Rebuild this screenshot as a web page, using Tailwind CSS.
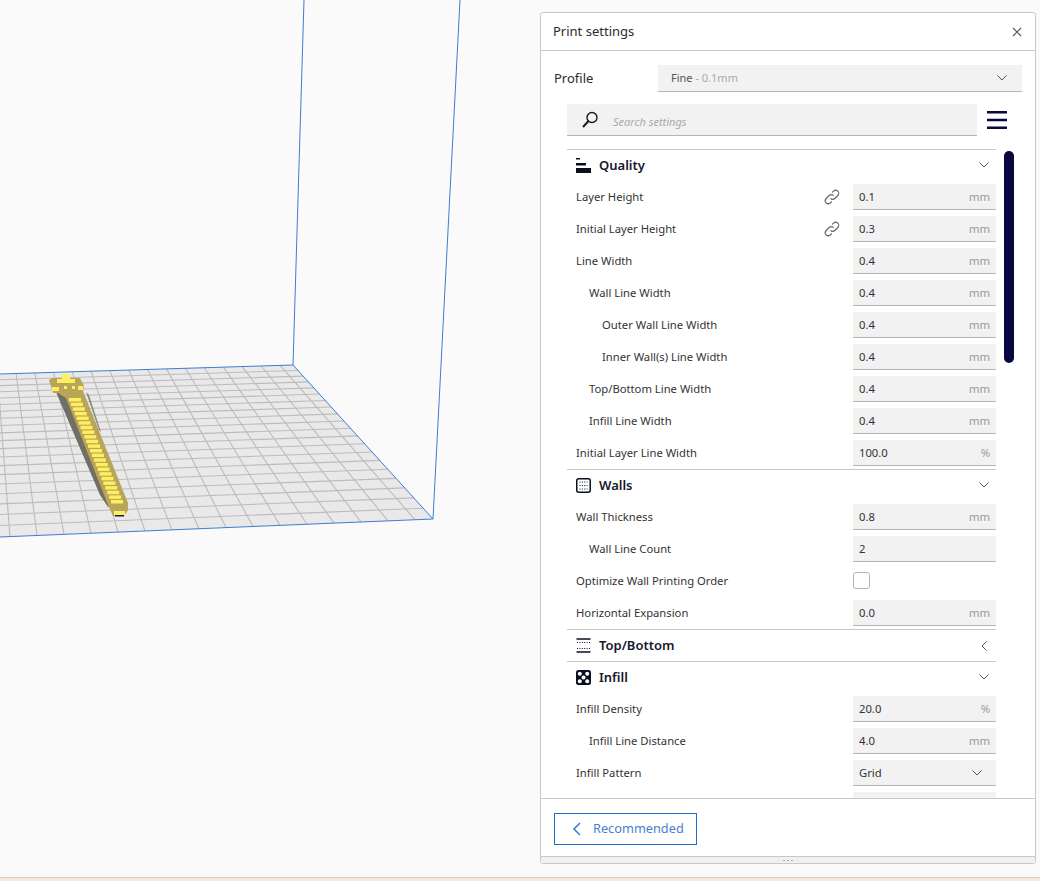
<!DOCTYPE html>
<html lang="en">

<head>
  <title>Print settings</title>
  <meta charset="UTF-8" />
  <script src="https://cdn.jsdelivr.net/npm/@tailwindcss/browser@4"></script>
</head>

<body class="font-['Noto_Sans',sans-serif] bg-[#fafafa] overflow-hidden">
  <div class="relative w-[1040px] h-[881px] flex flex-col">
    <!-- build volume -->
    <svg id="scene" class="flex-1 w-full" viewBox="0 0 1040 877">
      <polygon points="0,374 293,365 433,519 0,537" fill="#e9e9e9" />
      <g id="grid" stroke="#bcbcbc" stroke-width="1.1"></g>
      <g fill="none" stroke="#3d7dcf" stroke-width="1">
        <path d="M0 374 L293 365 L433 519 L0 537" />
        <path d="M293 365 L304 0" />
        <path d="M433 519 L460 0" />
      </g>
      <!-- model -->
      <polygon points="56,392 66,392 112,507 108,507 100,495" fill="#6f6f66" />
      <polygon points="86,392 89,395 101,432 99,430" fill="#8a8a80" />
      <polygon points="49,380 52,378 80,378 84,386 83,391 128,503 128,510 124,516 113,516 108,505 66,398 58,393 53,393" fill="#b8a558" />
      <g id="rungs" fill="#fdee62"></g>
      <g fill="#fdee62">
        <rect x="62" y="374" width="8" height="8" />
        <rect x="57" y="379" width="18" height="4" />
        <rect x="52" y="387" width="7" height="4" />
        <rect x="78" y="386" width="5" height="4" />
        <rect x="64" y="386" width="3" height="3" />
        <rect x="72" y="386" width="3" height="3" />
        <rect x="114" y="511" width="11" height="4" />
      </g>
      <rect x="115" y="515" width="9" height="1.5" fill="#1c1c30" />
    </svg>
    <div class="h-1 bg-[#f6e8de] border-t border-[#dcc8bc]"></div>

    <!-- print settings panel -->
    <div class="absolute left-[540px] top-3 w-[496px] h-[852px] flex flex-col bg-white border border-[#c8c8c8] rounded-[3px] overflow-hidden text-[#333]">
      <div class="h-[38px] shrink-0 flex items-center justify-between pl-3 pr-[13px] border-b border-[#c8c8c8]">
        <span class="text-[13px] text-[#2b2b2b]">Print settings</span>
        <svg class="w-[10px] h-[10px]" viewBox="0 0 10 10" fill="none" stroke="#555" stroke-width="1.1"><path d="M1 1l8 8M9 1l-8 8" /></svg>
      </div>

      <div class="flex-1 min-h-0 flex flex-col overflow-hidden">
        <div class="flex items-center h-[27px] mt-[14px] shrink-0">
          <span class="w-[104px] ml-[13px] text-[13px] text-[#2b2b2b]">Profile</span>
          <div class="w-[364px] h-[27px] flex items-center justify-between pl-[13px] pr-[15px] bg-[#f2f2f2] border-b border-[#b4b4b4] text-[11px] text-[#555]">
            <span>Fine <span class="text-[#aaa]">- 0.1mm</span></span>
            <svg class="w-[10px] h-[6px]" viewBox="0 0 10 6" fill="none" stroke="#555"><path d="M0.5 0.5L5 5l4.5-4.5" /></svg>
          </div>
        </div>

        <div class="flex items-center mt-3 ml-[26px] shrink-0">
          <div class="w-[410px] h-8 flex items-center bg-[#f2f2f2] border-b border-[#b4b4b4]">
            <svg class="w-[18px] h-[18px] ml-[14px]" viewBox="0 0 18 18" fill="none" stroke="#1a1a1a"><circle cx="11" cy="6.5" r="5" stroke-width="1.4" /><path d="M7.5 10L2 16" stroke-width="2" /></svg>
            <span class="ml-[14px] pt-[6px] text-[11px] italic text-[#aaa]">Search settings</span>
          </div>
          <svg class="w-5 h-[18px] ml-[10px]" viewBox="0 0 20 18" fill="#08073f"><rect width="20" height="2.5" /><rect y="7.75" width="20" height="2.5" /><rect y="15.5" width="20" height="2.5" /></svg>
        </div>

        <div class="relative flex-1 min-h-0 mt-[13px] ml-[26px] w-[429px] text-[11.25px] overflow-hidden">
          <!-- Quality -->
          <div class="h-8 flex items-center border-t border-[#c8c8c8] pl-[9px] pr-[7px]">
            <svg class="w-[15px] h-[15px] mr-2 shrink-0" viewBox="0 0 15 15" fill="#0b1020"><rect width="4" height="1.5" y="0" /><rect y="5" width="10" height="2.5" /><rect y="10" width="15" height="5" /></svg>
            <span class="flex-1 text-[13px] font-semibold text-[#16182c]">Quality</span>
            <svg class="w-[10px] h-[6px] -translate-y-px" viewBox="0 0 10 6" fill="none" stroke="#555"><path d="M0.5 0.5L5 5l4.5-4.5" /></svg>
          </div>
          <div class="h-8 flex items-center">
            <span class="flex-1 pl-[9px]">Layer Height</span>
            <svg class="w-4 h-4 mr-[13px]" viewBox="0 0 16 16" fill="none" stroke="#666" stroke-width="1.2"><path d="M6.5 9.5a3 3 0 0 0 4.3 0l3-3a3 3 0 0 0-4.3-4.3L8.2 3.5" /><path d="M9.5 6.5a3 3 0 0 0-4.3 0l-3 3a3 3 0 0 0 4.3 4.3l1.3-1.3" /></svg>
            <div class="w-[143px] h-[26px] pt-px flex items-center justify-between px-[6px] bg-[#f2f2f2] border-b border-[#b4b4b4]"><span>0.1</span><span class="text-[#999]">mm</span></div>
          </div>
          <div class="h-8 flex items-center">
            <span class="flex-1 pl-[9px]">Initial Layer Height</span>
            <svg class="w-4 h-4 mr-[13px]" viewBox="0 0 16 16" fill="none" stroke="#666" stroke-width="1.2"><path d="M6.5 9.5a3 3 0 0 0 4.3 0l3-3a3 3 0 0 0-4.3-4.3L8.2 3.5" /><path d="M9.5 6.5a3 3 0 0 0-4.3 0l-3 3a3 3 0 0 0 4.3 4.3l1.3-1.3" /></svg>
            <div class="w-[143px] h-[26px] pt-px flex items-center justify-between px-[6px] bg-[#f2f2f2] border-b border-[#b4b4b4]"><span>0.3</span><span class="text-[#999]">mm</span></div>
          </div>
          <div class="h-8 flex items-center">
            <span class="flex-1 pl-[9px]">Line Width</span>
            <div class="w-[143px] h-[26px] pt-px flex items-center justify-between px-[6px] bg-[#f2f2f2] border-b border-[#b4b4b4]"><span>0.4</span><span class="text-[#999]">mm</span></div>
          </div>
          <div class="h-8 flex items-center">
            <span class="flex-1 pl-[22px]">Wall Line Width</span>
            <div class="w-[143px] h-[26px] pt-px flex items-center justify-between px-[6px] bg-[#f2f2f2] border-b border-[#b4b4b4]"><span>0.4</span><span class="text-[#999]">mm</span></div>
          </div>
          <div class="h-8 flex items-center">
            <span class="flex-1 pl-[35px]">Outer Wall Line Width</span>
            <div class="w-[143px] h-[26px] pt-px flex items-center justify-between px-[6px] bg-[#f2f2f2] border-b border-[#b4b4b4]"><span>0.4</span><span class="text-[#999]">mm</span></div>
          </div>
          <div class="h-8 flex items-center">
            <span class="flex-1 pl-[35px]">Inner Wall(s) Line Width</span>
            <div class="w-[143px] h-[26px] pt-px flex items-center justify-between px-[6px] bg-[#f2f2f2] border-b border-[#b4b4b4]"><span>0.4</span><span class="text-[#999]">mm</span></div>
          </div>
          <div class="h-8 flex items-center">
            <span class="flex-1 pl-[22px]">Top/Bottom Line Width</span>
            <div class="w-[143px] h-[26px] pt-px flex items-center justify-between px-[6px] bg-[#f2f2f2] border-b border-[#b4b4b4]"><span>0.4</span><span class="text-[#999]">mm</span></div>
          </div>
          <div class="h-8 flex items-center">
            <span class="flex-1 pl-[22px]">Infill Line Width</span>
            <div class="w-[143px] h-[26px] pt-px flex items-center justify-between px-[6px] bg-[#f2f2f2] border-b border-[#b4b4b4]"><span>0.4</span><span class="text-[#999]">mm</span></div>
          </div>
          <div class="h-8 flex items-center">
            <span class="flex-1 pl-[9px]">Initial Layer Line Width</span>
            <div class="w-[143px] h-[26px] pt-px flex items-center justify-between px-[6px] bg-[#f2f2f2] border-b border-[#b4b4b4]"><span>100.0</span><span class="text-[#999]">%</span></div>
          </div>

          <!-- Walls -->
          <div class="h-8 flex items-center border-t border-[#c8c8c8] pl-[9px] pr-[7px]">
            <svg class="w-[15px] h-[15px] mr-2 shrink-0" viewBox="0 0 15 15" fill="none" stroke="#0b1020"><rect x="0.75" y="0.75" width="13.5" height="13.5" rx="2" stroke-width="1.5" /><path d="M3.5 4h8M3.5 7.5h8M3.5 11h8" stroke-width="1" stroke-dasharray="1 1.4" /></svg>
            <span class="flex-1 text-[13px] font-semibold text-[#16182c]">Walls</span>
            <svg class="w-[10px] h-[6px] -translate-y-px" viewBox="0 0 10 6" fill="none" stroke="#555"><path d="M0.5 0.5L5 5l4.5-4.5" /></svg>
          </div>
          <div class="h-8 flex items-center">
            <span class="flex-1 pl-[9px]">Wall Thickness</span>
            <div class="w-[143px] h-[26px] pt-px flex items-center justify-between px-[6px] bg-[#f2f2f2] border-b border-[#b4b4b4]"><span>0.8</span><span class="text-[#999]">mm</span></div>
          </div>
          <div class="h-8 flex items-center">
            <span class="flex-1 pl-[22px]">Wall Line Count</span>
            <div class="w-[143px] h-[26px] pt-px flex items-center justify-between px-[6px] bg-[#f2f2f2] border-b border-[#b4b4b4]"><span>2</span></div>
          </div>
          <div class="h-8 flex items-center">
            <span class="flex-1 pl-[9px]">Optimize Wall Printing Order</span>
            <div class="w-[143px]"><div class="w-[17px] h-[17px] -mt-px bg-white border border-[#b4b4b4] rounded-[3px]"></div></div>
          </div>
          <div class="h-8 flex items-center">
            <span class="flex-1 pl-[9px]">Horizontal Expansion</span>
            <div class="w-[143px] h-[26px] pt-px flex items-center justify-between px-[6px] bg-[#f2f2f2] border-b border-[#b4b4b4]"><span>0.0</span><span class="text-[#999]">mm</span></div>
          </div>

          <!-- Top/Bottom -->
          <div class="h-8 flex items-center border-t border-[#c8c8c8] pl-[9px] pr-[9px]">
            <svg class="w-[15px] h-[15px] mr-2 shrink-0" viewBox="0 0 15 15" fill="none" stroke="#0b1020"><path d="M0.5 1h14M0.5 14h14" stroke-width="1.4" /><path d="M1 4.5h13M1 10.5h13" stroke-width="1" stroke-dasharray="1 1.4" /></svg>
            <span class="flex-1 text-[13px] font-semibold text-[#16182c]">Top/Bottom</span>
            <svg class="w-[6px] h-[10px]" viewBox="0 0 6 10" fill="none" stroke="#555"><path d="M5.5 0.5L1 5l4.5 4.5" /></svg>
          </div>

          <!-- Infill -->
          <div class="h-8 flex items-center border-t border-[#c8c8c8] pl-[9px] pr-[7px]">
            <svg class="w-[15px] h-[15px] mr-2 shrink-0" viewBox="0 0 15 15"><rect width="15" height="15" rx="2.5" fill="#0b1020" /><g fill="#fff"><circle cx="3.8" cy="3.8" r="2" /><circle cx="11.2" cy="3.8" r="2" /><circle cx="3.8" cy="11.2" r="2" /><circle cx="11.2" cy="11.2" r="2" /><circle cx="7.5" cy="7.5" r="2" /></g></svg>
            <span class="flex-1 text-[13px] font-semibold text-[#16182c]">Infill</span>
            <svg class="w-[10px] h-[6px] -translate-y-px" viewBox="0 0 10 6" fill="none" stroke="#555"><path d="M0.5 0.5L5 5l4.5-4.5" /></svg>
          </div>
          <div class="h-8 flex items-center">
            <span class="flex-1 pl-[9px]">Infill Density</span>
            <div class="w-[143px] h-[26px] pt-px flex items-center justify-between px-[6px] bg-[#f2f2f2] border-b border-[#b4b4b4]"><span>20.0</span><span class="text-[#999]">%</span></div>
          </div>
          <div class="h-8 flex items-center">
            <span class="flex-1 pl-[22px]">Infill Line Distance</span>
            <div class="w-[143px] h-[26px] pt-px flex items-center justify-between px-[6px] bg-[#f2f2f2] border-b border-[#b4b4b4]"><span>4.0</span><span class="text-[#999]">mm</span></div>
          </div>
          <div class="h-8 flex items-center">
            <span class="flex-1 pl-[9px]">Infill Pattern</span>
            <div class="w-[143px] h-[26px] pt-px flex items-center justify-between pl-[6px] pr-[14px] bg-[#f2f2f2] border-b border-[#b4b4b4]"><span>Grid</span><svg class="w-[10px] h-[6px]" viewBox="0 0 10 6" fill="none" stroke="#555"><path d="M0.5 0.5L5 5l4.5-4.5" /></svg></div>
          </div>
          <div class="h-8 flex items-center">
            <span class="flex-1"></span>
            <div class="w-[143px] h-[26px] bg-[#f2f2f2]"></div>
          </div>
        </div>

        <!-- scrollbar -->
        <div class="absolute left-[463px] top-[138px] w-[10px] h-[212px] rounded-full bg-[#08073f]"></div>
      </div>

      <div class="h-[58px] shrink-0 flex items-center pl-[13px] border-t border-[#c8c8c8]">
        <div class="w-[143px] h-8 mt-[2px] flex items-center border border-[#196ec8] text-[12.75px] text-[#4a80d0]">
          <svg class="w-[9px] h-[14px] ml-[17px] mr-3" viewBox="0 0 9 14" fill="none" stroke="#3f7fd6" stroke-width="1.6"><path d="M8 1L2 7l6 6" /></svg>
          <span>Recommended</span>
        </div>
      </div>
      <div class="h-[7px] shrink-0 flex items-center justify-center gap-[2px] bg-[#f0f0f0] border-t border-[#c8c8c8]">
        <span class="w-[2px] h-px bg-[#aaa]"></span><span class="w-[2px] h-px bg-[#aaa]"></span><span class="w-[2px] h-px bg-[#aaa]"></span>
      </div>
    </div>
  </div>

  <script>
    // plate grid: lines run to the two vanishing points of the plate
    var ns = 'http://www.w3.org/2000/svg';
    var grid = document.getElementById('grid');
    var rungs = document.getElementById('rungs');
    var vx = -31, vy = 9, hx = 14950, hy = -85;

    function line(x1, y1, x2, y2) {
      var l = document.createElementNS(ns, 'line');
      l.setAttribute('x1', x1); l.setAttribute('y1', y1);
      l.setAttribute('x2', x2); l.setAttribute('y2', y2);
      grid.appendChild(l);
    }
    function frontY(x) { return 537 - 0.0416 * x; }

    // rows, spaced along the right edge
    var rows = 20;
    for (var i = 1; i < rows; i++) {
      var inv = 1 / 356 + (1 / 510 - 1 / 356) * i / rows;
      var y = vy + 1 / inv;
      var x = 293 + (y - 365) * 140 / 154;
      var s = (hy - y) / (hx - x);
      line(0, y - x * s, x, y);
    }
    // columns, spaced along the front edge
    for (var fx = 10; fx < 433; fx += 27) {
      var fy = frontY(fx);
      var k = (fx - vx) / (fy - vy);
      // intersect with the back edge
      var by = (374 + 0.0307 * (k * vy - vx)) / (1 + 0.0307 * k);
      line(vx + k * (by - vy), by, fx, fy);
    }
    // yellow rungs along the model
    var n = 23;
    for (var r = 0; r < n; r++) {
      var t = r / (n - 1);
      var rect = document.createElementNS(ns, 'rect');
      rect.setAttribute('x', 69 + 42 * t);
      rect.setAttribute('y', 398 + 102 * t);
      rect.setAttribute('width', 12);
      rect.setAttribute('height', 3.5);
      rungs.appendChild(rect);
    }
  </script>
</body>

</html>
